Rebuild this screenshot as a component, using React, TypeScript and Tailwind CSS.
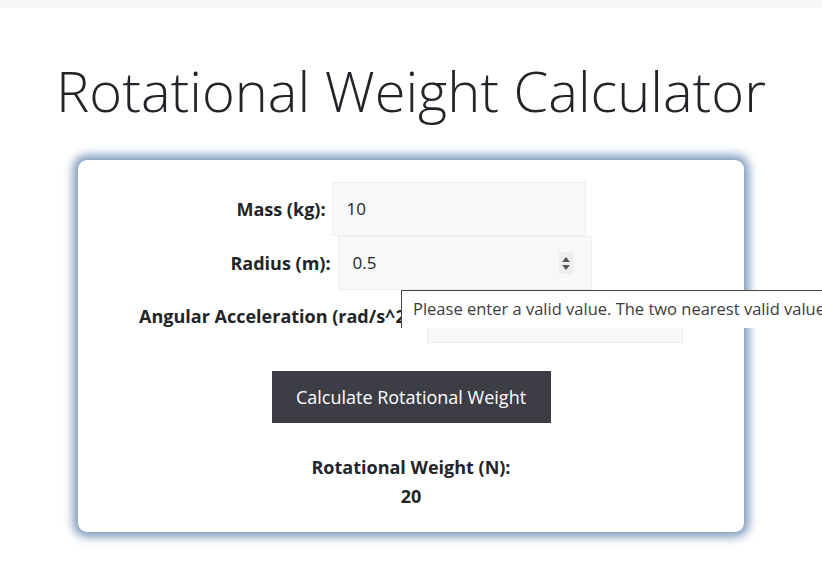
export default function App() {
  const font = { fontFamily: '"Open Sans", "Noto Sans", Arial, sans-serif' };

  return (
    <div className="relative min-h-screen w-full overflow-hidden bg-white text-[#212529]" style={font}>
      <div className="h-2 w-full bg-[#f6f7f9]" />

      <h1 className="mt-[48px] text-center text-[56px] font-light leading-[68px] text-[#212529]">
        Rotational Weight Calculator
      </h1>

      <div className="mx-auto mt-[36px] flex w-[666px] flex-col items-center rounded-[9px] bg-white pb-[21px] pt-[22px] shadow-[0_0_10px_5px_rgba(95,130,172,0.8)]">
        <div className="flex items-center justify-center">
          <label className="mr-[6px] text-[18px] font-bold">Mass (kg):</label>
          <div className="flex h-[54px] w-[254px] items-center border border-[#eceef1] bg-[#f7f8fa] pl-[14px] text-[17px]">10</div>
        </div>

        <div className="flex items-center justify-center">
          <label className="mr-[7px] text-[18px] font-bold">Radius (m):</label>
          <div className="flex h-[54px] w-[254px] items-center justify-between border border-[#eceef1] bg-[#f7f8fa] pl-[14px] pr-[18px] text-[17px]">
            <span>0.5</span>
            <span className="flex h-[22px] w-[14px] flex-col items-center justify-center gap-[3px] bg-[#eceef0]">
              <svg width="8" height="5" viewBox="0 0 8 5"><path d="M0 5 L4 0 L8 5 Z" fill="#555" /></svg>
              <svg width="8" height="5" viewBox="0 0 8 5"><path d="M0 0 L8 0 L4 5 Z" fill="#555" /></svg>
            </span>
          </div>
        </div>

        <div className="flex items-center justify-center">
          <label className="mr-[10px] text-[18px] font-bold">Angular Acceleration (rad/s^2):</label>
          <div className="flex h-[53px] w-[256px] items-center border border-[#eceef1] bg-[#f7f8fa] pl-[14px] text-[17px]">10</div>
        </div>

        <button className="mt-[28px] h-[52px] w-[279px] bg-[#3c3d45] text-[18px] text-white">
          Calculate Rotational Weight
        </button>

        <div className="mt-[30px] text-center text-[18px] font-bold leading-[29px]">
          <div>Rotational Weight (N):</div>
          <div>20</div>
        </div>
      </div>

      <div className="absolute left-[401px] top-[290px] flex h-[38px] items-center whitespace-nowrap border-l border-t border-[#444] bg-white pl-[11px] pr-4 text-[16.5px] text-[#3c3c3c]">
        Please enter a valid value. The two nearest valid values are 1 and 2.
      </div>
    </div>
  );
}
